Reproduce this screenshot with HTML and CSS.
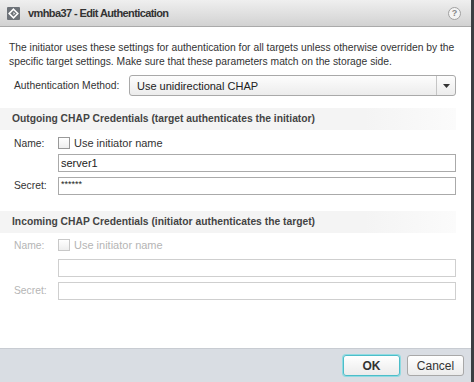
FILE: index.html
```html
<!DOCTYPE html>
<html>
<head>
<meta charset="utf-8">
<link rel="stylesheet" href="styles.css">
</head>
<body>
<div class="dialog">
  <div class="titlebar">
    <span class="app-icon">
      <svg width="13" height="13" viewBox="0 0 13 13"><rect x="0" y="0" width="13" height="13" rx="1" fill="#6d7278"/><path d="M6.5 2.2 L10.8 6.5 L6.5 10.8 L2.2 6.5 Z" fill="none" stroke="#fff" stroke-width="1.6"/><path d="M6.5 5 L8 6.5 L6.5 8 Z" fill="#fff"/></svg>
    </span>
    <span class="title">vmhba37 - Edit Authentication</span>
    <span class="help">?</span>
  </div>
  <div class="content">
    <p class="intro">The initiator uses these settings for authentication for all targets unless otherwise overriden by the specific target settings. Make sure that these parameters match on the storage side.</p>
    <div class="method-row">
      <span class="method-label">Authentication Method:</span>
      <div class="select">
        <span class="select-value">Use unidirectional CHAP</span>
        <span class="select-arrow"><svg width="7" height="4" viewBox="0 0 7 4"><path d="M0 0 L7 0 L3.5 4 Z" fill="#333"/></svg></span>
      </div>
    </div>
    <div class="section-head">Outgoing CHAP Credentials (target authenticates the initiator)</div>
    <div class="cred">
      <div class="row name-row">
        <span class="lbl">Name:</span>
        <label class="check"><span class="box"></span>Use initiator name</label>
      </div>
      <div class="row">
        <span class="lbl"></span>
        <div class="field">server1</div>
      </div>
      <div class="row">
        <span class="lbl">Secret:</span>
        <div class="field secret">******</div>
      </div>
    </div>
    <div class="section-head">Incoming CHAP Credentials (initiator authenticates the target)</div>
    <div class="cred disabled">
      <div class="row name-row">
        <span class="lbl">Name:</span>
        <label class="check"><span class="box"></span>Use initiator name</label>
      </div>
      <div class="row">
        <span class="lbl"></span>
        <div class="field"></div>
      </div>
      <div class="row">
        <span class="lbl">Secret:</span>
        <div class="field"></div>
      </div>
    </div>
  </div>
  <div class="footer">
    <button class="btn ok">OK</button>
    <button class="btn">Cancel</button>
  </div>
</div>
</body>
</html>
```
FILE: styles.css
```css
html, body {
  margin: 0;
  padding: 0;
}
body {
  background: #3c3f42;
  width: 474px;
  height: 382px;
  overflow: hidden;
  font-family: "Liberation Sans", Arial, sans-serif;
  font-size: 10.3px;
  color: #333;
}
.dialog {
  width: 471px;
  height: 382px;
  background: #fff;
  display: flex;
  flex-direction: column;
}
.titlebar {
  height: 26px;
  flex: none;
  border-bottom: 1px solid #aaa;
  background: linear-gradient(#efefef, #d2d2d2);
  display: flex;
  align-items: center;
  padding: 0 7px;
}
.app-icon {
  display: flex;
  width: 13px;
  height: 13px;
  margin-right: 8px;
}
.title {
  font-weight: bold;
  font-size: 11px;
  letter-spacing: -0.6px;
  color: #333;
  flex: 1;
}
.help {
  width: 11px;
  height: 11px;
  border-radius: 50%;
  border: 1px solid #a0a0a0;
  background: #f4f4f4;
  color: #888;
  font-size: 9px;
  font-weight: bold;
  line-height: 11px;
  text-align: center;
  margin-right: 3px;
}
.content {
  flex: 1;
  padding: 0 15px 0 9px;
}
.intro {
  margin: 14px 0 0 0;
  line-height: 14px;
}
.method-row {
  display: flex;
  align-items: center;
  margin-top: 6px;
  padding-left: 5px;
}
.method-label {
  width: 115px;
}
.select {
  flex: 1;
  height: 19px;
  border: 1px solid #a9a9a9;
  border-radius: 3px;
  background: linear-gradient(#fdfdfd, #ececec);
  display: flex;
  align-items: center;
}
.select-value {
  flex: 1;
  padding-left: 7px;
  color: #222;
  font-size: 11px;
}
.select-arrow {
  width: 18px;
  height: 100%;
  border-left: 1px solid #c5c5c5;
  display: flex;
  align-items: center;
  justify-content: center;
}
.section-head {
  margin: 12px 0 0 -9px;
  padding: 5px 9px 6px 12px;
  height: 11px;
  background: linear-gradient(90deg, #f4f4f4 80%, #fbfbfb);
  font-weight: bold;
  color: #444;
}
.cred {
  padding: 5px 0 0 5px;
}
.cred + .section-head {
  margin-top: 15px;
}
.cred.disabled {
  padding-top: 4px;
}
.row {
  display: flex;
  align-items: center;
  height: 21px;
  margin-bottom: 2px;
}
.name-row {
  height: 16px;
  margin-bottom: 1px;
}
.disabled .name-row {
  margin-bottom: 4px;
}
.lbl {
  width: 44px;
  flex: none;
}
.check {
  display: flex;
  align-items: center;
  font-size: 11px;
}
.box {
  width: 10px;
  height: 10px;
  border: 1px solid #999;
  background: linear-gradient(#fff, #eee);
  margin-right: 4px;
}
.field {
  flex: 1;
  height: 16px;
  border: 1px solid #aaa;
  padding-left: 2px;
  line-height: 16px;
  color: #222;
  font-size: 11px;
}
.secret {
  font-size: 9px;
  line-height: 12px;
}
.disabled {
  color: #b5b5b5;
}
.disabled .check {
  color: #b5b5b5;
}
.disabled .box {
  border-color: #c8c8c8;
}
.disabled .field {
  border-color: #cfcfcf;
}
.footer {
  height: 33px;
  flex: none;
  border-top: 1px solid #c8ccd2;
  background: #d9dde3;
  display: flex;
  align-items: center;
  justify-content: flex-end;
  gap: 7px;
  padding-right: 7px;
}
.btn {
  width: 57px;
  height: 21px;
  border: 1px solid #a8a8a8;
  border-radius: 3px;
  background: linear-gradient(#ffffff, #ebebeb);
  font-family: "Liberation Sans", Arial, sans-serif;
  font-size: 12px;
  color: #333;
  padding: 0;
}
.ok {
  font-weight: bold;
  border: 1px solid #4cbdc9;
  box-shadow: 0 0 0 1px #8fdbe2;
}
```
